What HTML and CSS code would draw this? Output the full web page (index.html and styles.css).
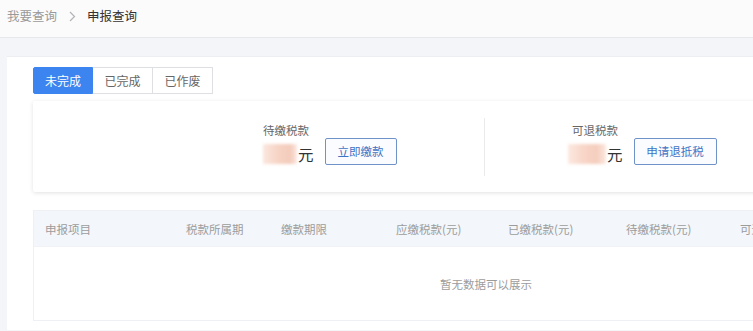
FILE: index.html
```html
<!DOCTYPE html>
<html lang="zh-CN">
<head>
<meta charset="utf-8">
<title>申报查询</title>
<link rel="stylesheet" href="styles.css">
</head>
<body>
<div class="topbar">
  <span class="crumb-link">我要查询</span>
  <svg class="crumb-sep" width="7" height="11" viewBox="0 0 7 11"><path d="M1 1 L5.5 5.5 L1 10" fill="none" stroke="#b4b4b8" stroke-width="1.2"/></svg>
  <span class="crumb-current">申报查询</span>
</div>
<div class="page">
  <div class="panel">
    <div class="tabs">
      <div class="tab active">未完成</div>
      <div class="tab">已完成</div>
      <div class="tab">已作废</div>
    </div>
    <div class="summary">
      <div class="sum-col left">
        <div class="sum-label">待缴税款</div>
        <div class="sum-row">
          <span class="blur blur-a"></span><span class="yuan">元</span>
          <button class="btn btn-a">立即缴款</button>
        </div>
      </div>
      <div class="sum-col right">
        <div class="sum-label">可退税款</div>
        <div class="sum-row">
          <span class="blur blur-b"></span><span class="yuan">元</span>
          <button class="btn btn-b">申请退抵税</button>
        </div>
      </div>
    </div>
    <div class="table">
      <div class="thead">
        <div class="th c1">申报项目</div>
        <div class="th c2">税款所属期</div>
        <div class="th c3">缴款期限</div>
        <div class="th c4">应缴税款(元)</div>
        <div class="th c5">已缴税款(元)</div>
        <div class="th c6">待缴税款(元)</div>
        <div class="th c7">可退税款(元)</div>
      </div>
      <div class="tbody">暂无数据可以展示</div>
    </div>
  </div>
</div>
</body>
</html>
```
FILE: styles.css
```css
html, body {
  margin: 0;
  padding: 0;
  width: 753px;
  height: 331px;
  overflow: hidden;
  background: #f4f5f9;
  font-family: "Noto Sans CJK SC", "Noto Sans", sans-serif;
}
.topbar {
  height: 38px;
  box-sizing: border-box;
  border-bottom: 1px solid #e6e8ec;
  background: #fbfbfc;
  display: flex;
  align-items: flex-start;
  padding: 7px 0 0 7px;
  font-size: 12.5px;
  line-height: 18px;
}
.crumb-link { color: #9a9a9a; }
.crumb-sep { margin: 4px 11px 0 12px; }
.crumb-current { color: #333; }
.page {
  padding: 18px 0 0 7px;
}
.panel {
  background: #fff;
  border-top: 1px solid #eceef2;
  padding: 10px 0 0 26px;
  width: 746px;
  height: 274px;
  box-sizing: border-box;
  overflow: hidden;
}
.tabs {
  display: flex;
  height: 27px;
}
.tab {
  width: 60px;
  box-sizing: border-box;
  border: 1px solid #dedfe3;
  border-left: none;
  font-size: 12px;
  color: #666;
  display: flex;
  align-items: center;
  justify-content: center;
}
.tab:first-child { border-left: 1px solid #dedfe3; }
.tab.active {
  background: #3c84ef;
  border-color: #3c84ef;
  color: #fff;
  border-radius: 2px 0 0 2px;
}
.summary {
  margin-top: 7px;
  width: 906px;
  height: 91px;
  box-sizing: border-box;
  background: #fff;
  box-shadow: 0 1px 4px rgba(0, 0, 0, 0.12);
  border-radius: 2px;
  display: flex;
  align-items: center;
}
.sum-col {
  width: 452px;
  height: 58px;
  box-sizing: border-box;
  flex-shrink: 0;
}
.sum-col.left {
  padding-left: 230px;
  border-right: 1px solid #ebebeb;
}
.sum-col.right { padding-left: 87px; }
.sum-label {
  font-size: 11.5px;
  color: #666;
  line-height: 16px;
  margin-top: 4px;
}
.sum-row {
  display: flex;
  align-items: center;
  margin-top: 0;
}
.blur {
  display: inline-block;
  height: 20px;
  filter: blur(1.5px);
  margin-top: 6px;
}
.blur-a {
  width: 34px;
  background: linear-gradient(90deg, #fbe7df 0%, #f6d3c4 45%, #f3cbbb 80%, #fbe9e2 100%);
}
.blur-b {
  width: 38px;
  margin-left: -4px;
  background: linear-gradient(90deg, #fce9e1 0%, #f8d6c8 40%, #f5cdbd 75%, #fce8df 100%);
}
.yuan {
  font-size: 15.5px;
  color: #333;
  margin-left: 1px;
  margin-top: 5px;
}
.btn {
  height: 27px;
  box-sizing: border-box;
  background: #fbfcff;
  border: 1px solid #6f93c9;
  border-radius: 2px;
  color: #3f73c4;
  font-family: "Noto Sans CJK SC", "Noto Sans", sans-serif;
  font-size: 11.5px;
  padding: 0;
  margin-left: 11px;
}
.btn-a { width: 72px; }
.btn-b { width: 83px; margin-left: 11px; }
.table {
  margin-top: 18px;
  width: 906px;
  border: 1px solid #eef0f3;
  box-sizing: border-box;
}
.thead {
  height: 35px;
  background: #f3f6fa;
  display: flex;
  align-items: center;
  font-size: 11.5px;
  color: #9c9c9c;
}
.th {
  box-sizing: border-box;
  padding-left: 11px;
  white-space: nowrap;
  flex-shrink: 0;
}
.c1 { width: 141px; }
.c2 { width: 95px; }
.c3 { width: 115px; }
.c4 { width: 112px; }
.c5 { width: 118px; }
.c6 { width: 114px; }
.c7 { width: 120px; }
.tbody {
  height: 73px;
  display: flex;
  align-items: center;
  justify-content: center;
  font-size: 11.5px;
  color: #9c9c9c;
  border-top: 1px solid #f0f2f5;
}
```
